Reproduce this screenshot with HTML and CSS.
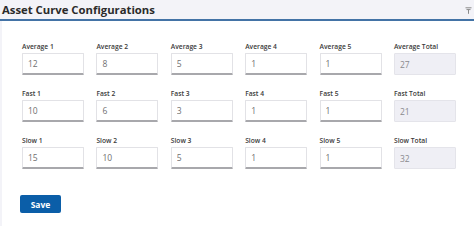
FILE: index.html
```html
<!DOCTYPE html>
<html lang="en">

<head>
    <meta charset="UTF-8">
    <meta name="viewport" content="width=device-width, initial-scale=1.0">
    <title>Asset Curve Configurations</title>
    <link rel="stylesheet" href="styles.css">
</head>

<body>
    <div class="panel">
        <!-- Header -->
        <div class="panel-header">
            <h2>Asset Curve Configurations</h2>
            <svg class="pin" width="7" height="7" viewBox="0 0 7 7">
                <path d="M0.5 0.8 H6.5 M1.5 2.6 H5.5 M3.5 2.6 V6.8" stroke="#8a8a8a" stroke-width="1" fill="none"/>
            </svg>
        </div>

        <!-- Form -->
        <form class="curve-form" id="curveForm">
            <div class="field-row">
                <div class="form-group"><label for="avg1">Average 1</label><input type="text" id="avg1" value="12"></div>
                <div class="form-group"><label for="avg2">Average 2</label><input type="text" id="avg2" value="8"></div>
                <div class="form-group"><label for="avg3">Average 3</label><input type="text" id="avg3" value="5"></div>
                <div class="form-group"><label for="avg4">Average 4</label><input type="text" id="avg4" value="1"></div>
                <div class="form-group"><label for="avg5">Average 5</label><input type="text" id="avg5" value="1"></div>
                <div class="form-group"><label for="avgTotal">Average Total</label><input type="text" id="avgTotal" class="total" value="27" readonly></div>
            </div>

            <div class="field-row">
                <div class="form-group"><label for="fast1">Fast 1</label><input type="text" id="fast1" value="10"></div>
                <div class="form-group"><label for="fast2">Fast 2</label><input type="text" id="fast2" value="6"></div>
                <div class="form-group"><label for="fast3">Fast 3</label><input type="text" id="fast3" value="3"></div>
                <div class="form-group"><label for="fast4">Fast 4</label><input type="text" id="fast4" value="1"></div>
                <div class="form-group"><label for="fast5">Fast 5</label><input type="text" id="fast5" value="1"></div>
                <div class="form-group"><label for="fastTotal">Fast Total</label><input type="text" id="fastTotal" class="total" value="21" readonly></div>
            </div>

            <div class="field-row">
                <div class="form-group"><label for="slow1">Slow 1</label><input type="text" id="slow1" value="15"></div>
                <div class="form-group"><label for="slow2">Slow 2</label><input type="text" id="slow2" value="10"></div>
                <div class="form-group"><label for="slow3">Slow 3</label><input type="text" id="slow3" value="5"></div>
                <div class="form-group"><label for="slow4">Slow 4</label><input type="text" id="slow4" value="1"></div>
                <div class="form-group"><label for="slow5">Slow 5</label><input type="text" id="slow5" value="1"></div>
                <div class="form-group"><label for="slowTotal">Slow Total</label><input type="text" id="slowTotal" class="total" value="32" readonly></div>
            </div>

            <div class="actions">
                <button type="submit" class="save-btn">Save</button>
            </div>
        </form>
    </div>
</body>

</html>
```

FILE: styles.css
```css
/* Global styles */
body {
    font-family: 'Open Sans', 'Noto Sans', sans-serif;
    background-color: #f3f3f8;
    margin: 0;
    padding: 0;
}

.panel {
    margin-left: 2px;
    background-color: #ffffff;
    min-height: 226px;
}

.panel-header {
    display: flex;
    justify-content: space-between;
    align-items: center;
    height: 19px;
    background-color: #f3f3f8;
    border-bottom: 2px solid #4373a6;
    margin-left: -2px;
    padding-left: 2px;
}

h2 {
    margin: 0;
    font-size: 11.3px;
    font-weight: 700;
    color: #2b2b2b;
    line-height: 19px;
}

.pin {
    margin-right: 2px;
    margin-top: 1px;
}

.curve-form {
    display: flex;
    flex-direction: column;
    gap: 14px;
    padding: 21px 0 0 18px;
}

.field-row {
    display: grid;
    grid-template-columns: repeat(6, 62px);
    column-gap: 12.4px;
    padding-left: 2px;
}

.form-group {
    display: flex;
    flex-direction: column;
    gap: 2px;
}

label {
    font-size: 6.7px;
    font-weight: 600;
    color: #3a3a3a;
    line-height: 9px;
}

input[type="text"] {
    width: 100%;
    height: 22px;
    padding: 0 5px;
    border: 1px solid #e2e2e6;
    border-bottom: 2px solid #a8a8ac;
    border-radius: 1px;
    font-family: inherit;
    font-size: 8.5px;
    color: #707070;
    box-sizing: border-box;
    background-color: #ffffff;
}

input.total {
    background-color: #efeff5;
    border: 1px solid #e4e4ea;
    color: #8a8a8e;
}

.actions {
    display: flex;
    padding-top: 12px;
}

.save-btn {
    width: 41px;
    height: 18px;
    padding: 0;
    background-color: #0b5ea8;
    color: #ffffff;
    border: none;
    border-radius: 2px;
    font-family: inherit;
    font-size: 8.5px;
    font-weight: 700;
    cursor: pointer;
}
```
